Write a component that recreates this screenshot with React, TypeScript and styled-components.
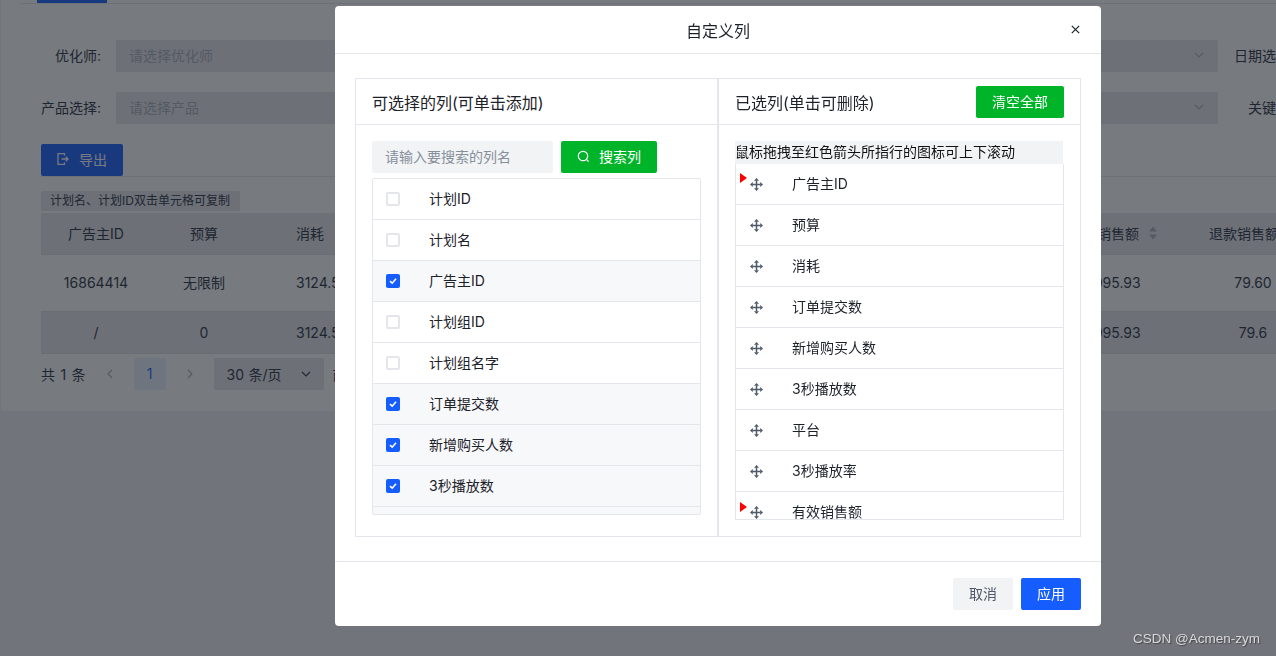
import React from 'react';
import styled, { createGlobalStyle } from 'styled-components';

const GlobalStyle = createGlobalStyle`
  html, body {
    margin: 0;
    padding: 0;
    height: 100%;
    overflow: hidden;
    background: #eff0f6;
    font-family: Inter, "Noto Sans CJK SC", sans-serif;
    font-size: 14px;
    color: #1d2129;
  }
  * {
    box-sizing: border-box;
  }
`;

const available = [
  { name: '计划ID', checked: false },
  { name: '计划名', checked: false },
  { name: '广告主ID', checked: true },
  { name: '计划组ID', checked: false },
  { name: '计划组名字', checked: false },
  { name: '订单提交数', checked: true },
  { name: '新增购买人数', checked: true },
  { name: '3秒播放数', checked: true },
];

const selected = ['广告主ID', '预算', '消耗', '订单提交数', '新增购买人数', '3秒播放数', '平台', '3秒播放率', '有效销售额'];

const ExportIcon = () => (
  <svg width="12" height="14" viewBox="0 0 12 14" fill="none" stroke="currentColor" strokeWidth="1.3">
    <path d="M7.5 3.5V1.7H1V12.3H7.5V10.5" />
    <path d="M4.5 7H11M8.8 4.8L11 7L8.8 9.2" />
  </svg>
);

const SearchIcon = () => (
  <svg width="13" height="13" viewBox="0 0 13 13" fill="none" stroke="currentColor" strokeWidth="1.2">
    <circle cx="6" cy="6" r="4.7" />
    <path d="M9.5 9.5L11.6 11.6" />
  </svg>
);

const DragIcon = () => (
  <svg width="13" height="13" viewBox="0 0 13 13">
    <path d="M6.5 0L9 2.8H4ZM6.5 13L4 10.2H9ZM0 6.5L2.8 4V9ZM13 6.5L10.2 9V4Z" fill="currentColor" />
    <path d="M6.5 2.5V10.5M2.5 6.5H10.5" fill="none" stroke="currentColor" strokeWidth="1.5" />
  </svg>
);

const CloseIcon = () => (
  <svg width="9" height="9" viewBox="0 0 9 9" fill="none" stroke="#1d2129" strokeWidth="1.2">
    <path d="M0.8 0.8L8.2 8.2M8.2 0.8L0.8 8.2" />
  </svg>
);

const SortIcon = () => (
  <SortGlyph width="8" height="14" viewBox="0 0 8 14">
    <path d="M4 0.5L8 5.5H0ZM4 13.5L0 8.5H8Z" fill="#a9aeb8" />
  </SortGlyph>
);

const Chevron = () => (
  <svg width="12" height="12" viewBox="0 0 12 12" fill="none" stroke="currentColor" strokeWidth="1.1">
    <path d="M2 4L6 8L10 4" />
  </svg>
);

const Left = () => (
  <svg width="12" height="12" viewBox="0 0 12 12" fill="none" stroke="currentColor" strokeWidth="1.1">
    <path d="M8 2L4 6L8 10" />
  </svg>
);

const Right = () => (
  <svg width="12" height="12" viewBox="0 0 12 12" fill="none" stroke="currentColor" strokeWidth="1.1">
    <path d="M4 2L8 6L4 10" />
  </svg>
);

function Background() {
  return (
    <Card>
      <Tabs>
        <ActiveTab />
      </Tabs>
      <FormArea>
        <FormRow>
          <FieldLabel>优化师:</FieldLabel>
          <SelectBox>
            请选择优化师
            <Chevron />
          </SelectBox>
          <TrailingLabel>日期选</TrailingLabel>
        </FormRow>
        <FormRow>
          <FieldLabel>产品选择:</FieldLabel>
          <SelectBox>
            请选择产品
            <Chevron />
          </SelectBox>
          <TrailingLabel $indent={30}>关键</TrailingLabel>
        </FormRow>
      </FormArea>
      <ActionBar>
        <ExportButton>
          <ExportIcon />
          导出
        </ExportButton>
      </ActionBar>
      <NoteTag>计划名、计划ID双击单元格可复制</NoteTag>
      <Table>
        <HeadRow>
          <Cell>广告主ID</Cell>
          <Cell>预算</Cell>
          <Cell $start>消耗</Cell>
          <Cell />
          <Cell>
            有效销售额
            <SortIcon />
          </Cell>
          <Cell>
            退款销售额
            <SortIcon />
          </Cell>
        </HeadRow>
        <BodyRow $height={57}>
          <Cell>16864414</Cell>
          <Cell>无限制</Cell>
          <Cell $start>3124.56</Cell>
          <Cell />
          <Cell>2995.93</Cell>
          <Cell>79.60</Cell>
        </BodyRow>
        <BodyRow $height={42} $total>
          <Cell>/</Cell>
          <Cell>0</Cell>
          <Cell $start>3124.56</Cell>
          <Cell />
          <Cell>2995.93</Cell>
          <Cell>79.6</Cell>
        </BodyRow>
      </Table>
      <Pagination>
        <span>共 1 条</span>
        <PageArrow>
          <Left />
        </PageArrow>
        <PageNumber>1</PageNumber>
        <PageArrow>
          <Right />
        </PageArrow>
        <PageSize>
          30 条/页
          <Chevron />
        </PageSize>
        <span>前往</span>
      </Pagination>
    </Card>
  );
}

function App() {
  return (
    <>
      <GlobalStyle />
      <Background />
      <Mask>
        <Dialog>
          <DialogHeader>
            自定义列
            <CloseButton>
              <CloseIcon />
            </CloseButton>
          </DialogHeader>
          <DialogBody>
            <Panels>
              <Panel>
                <PanelHead>可选择的列(可单击添加)</PanelHead>
                <PanelContent>
                  <SearchRow>
                    <SearchInput placeholder="请输入要搜索的列名" />
                    <SearchButton>
                      <SearchIcon />
                      搜索列
                    </SearchButton>
                  </SearchRow>
                  <ColumnList>
                    {available.map((item) => (
                      <ColumnRow key={item.name} $checked={item.checked}>
                        <Checkbox $checked={item.checked}>
                          {item.checked && (
                            <svg width="8" height="8" viewBox="0 0 8 8" fill="none" stroke="#fff" strokeWidth="1.6">
                              <path d="M1 4.2L3.2 6.2L7 1.8" />
                            </svg>
                          )}
                        </Checkbox>
                        <RowLabel>{item.name}</RowLabel>
                      </ColumnRow>
                    ))}
                  </ColumnList>
                </PanelContent>
              </Panel>
              <Panel>
                <PanelHead>
                  已选列(单击可删除)
                  <ClearButton>清空全部</ClearButton>
                </PanelHead>
                <PanelContent>
                  <Hint>鼠标拖拽至红色箭头所指行的图标可上下滚动</Hint>
                  <SelectedList>
                    {selected.map((name, i) => (
                      <SelectedRow key={name}>
                        {i === 0 && <RedArrow $top={9} />}
                        {i === 8 && <RedArrow $top={10} />}
                        <DragHandle>
                          <DragIcon />
                        </DragHandle>
                        <RowLabel>{name}</RowLabel>
                      </SelectedRow>
                    ))}
                  </SelectedList>
                </PanelContent>
              </Panel>
            </Panels>
          </DialogBody>
          <DialogFooter>
            <CancelButton>取消</CancelButton>
            <ApplyButton>应用</ApplyButton>
          </DialogFooter>
        </Dialog>
      </Mask>
      <Watermark>CSDN @Acmen-zym</Watermark>
    </>
  );
}

export default App;

const Card = styled.div`
  width: 1275px;
  height: 411px;
  margin-left: 1px;
  padding: 0 0 0 40px;
  background: #fff;
  border-radius: 0 0 4px 4px;
  overflow: hidden;
`;

const Tabs = styled.div`
  height: 4px;
  margin-left: -20px;
  padding-left: 16px;
  border-bottom: 1px solid #e5e6eb;
`;

const ActiveTab = styled.div`
  width: 70px;
  height: 3px;
  background: #165dff;
`;

const FormArea = styled.div`
  display: flex;
  flex-direction: column;
  gap: 20px;
  padding-top: 36px;
`;

const FormRow = styled.div`
  display: flex;
  align-items: center;
  height: 32px;
`;

const FieldLabel = styled.div`
  flex: none;
  width: 91px;
  margin: 0 0 2px -16px;
  padding-right: 15px;
  text-align: right;
  white-space: nowrap;
  color: #272e3b;
`;

const SelectBox = styled.div`
  flex: none;
  display: flex;
  align-items: center;
  justify-content: space-between;
  width: 1102px;
  height: 32px;
  padding: 0 13px 2px 13px;
  background: #e5e6eb;
  color: #a9aeb8;
  border-radius: 2px;
`;

const TrailingLabel = styled.div<{ $indent?: number }>`
  flex: none;
  margin-bottom: 2px;
  padding-left: ${(p) => p.$indent ?? 16}px;
  white-space: nowrap;
  color: #272e3b;
`;

const ActionBar = styled.div`
  height: 33px;
  margin-top: 20px;
  border-bottom: 1px solid #e5e6eb;
`;

const ExportButton = styled.div`
  display: flex;
  align-items: center;
  justify-content: center;
  gap: 10px;
  width: 82px;
  height: 32px;
  padding-bottom: 2px;
  background: #165dff;
  color: #fff;
  border-radius: 2px;
`;

const NoteTag = styled.div`
  width: 199px;
  height: 20px;
  margin-top: 14px;
  padding-left: 9px;
  background: #e5e6eb;
  border-radius: 2px;
  font-size: 12px;
  line-height: 20px;
  color: #272e3b;
`;

const Table = styled.div`
  margin-top: 2px;
`;

const rowColumns = '110px 106px 107px 679px 140px 140px';

const HeadRow = styled.div`
  display: grid;
  grid-template-columns: ${rowColumns};
  height: 42px;
  align-items: center;
  background: #e5e6eb;
  border-bottom: 1px solid #dcdee3;
  color: #272e3b;
`;

const BodyRow = styled.div<{ $height: number; $total?: boolean }>`
  display: grid;
  grid-template-columns: ${rowColumns};
  height: ${(p) => p.$height}px;
  padding-top: ${(p) => (p.$total ? '2px' : '0')};
  align-items: center;
  border-bottom: 1px solid #dcdee3;
  background: ${(p) => (p.$total ? '#e5e6eb' : '#fff')};
  color: #272e3b;
`;

const Cell = styled.div<{ $start?: boolean }>`
  display: flex;
  align-items: center;
  justify-content: ${(p) => (p.$start ? 'flex-start' : 'center')};
  padding: 0 0 2px ${(p) => (p.$start ? '39px' : '0')};
  white-space: nowrap;
`;

const SortGlyph = styled.svg`
  flex: none;
  margin-left: 10px;
`;

const Pagination = styled.div`
  display: flex;
  align-items: center;
  height: 32px;
  margin-top: 5px;
  padding-bottom: 2px;
  word-spacing: 1.5px;
  color: #272e3b;
`;

const PageArrow = styled.div`
  display: flex;
  align-items: center;
  justify-content: center;
  width: 32px;
  height: 32px;
  margin: 0 8px;
  color: #a9aeb8;
`;

const PageNumber = styled.div`
  width: 32px;
  height: 32px;
  line-height: 32px;
  text-align: center;
  background: #e8f3ff;
  color: #165dff;
  border-radius: 2px;
`;

const PageSize = styled.div`
  display: flex;
  align-items: center;
  justify-content: space-between;
  width: 110px;
  height: 32px;
  margin-right: 9px;
  padding: 0 12px 0 13px;
  word-spacing: 0.5px;
  background: #e5e6eb;
  border-radius: 2px;
`;

const Mask = styled.div`
  position: fixed;
  inset: 0;
  background: rgba(29, 33, 41, 0.6);
`;

const Dialog = styled.div`
  position: absolute;
  left: 335px;
  top: 6px;
  display: flex;
  flex-direction: column;
  width: 766px;
  height: 620px;
  background: #fff;
  border-radius: 4px;
`;

const DialogHeader = styled.div`
  position: relative;
  flex: none;
  display: flex;
  align-items: center;
  justify-content: center;
  height: 48px;
  border-bottom: 1px solid #e5e6eb;
  font-size: 16px;
  color: #1d2129;
`;

const CloseButton = styled.span`
  position: absolute;
  right: 21px;
  top: 19px;
  display: flex;
`;

const DialogBody = styled.div`
  flex: 1;
  padding: 24px 20px;
`;

const Panels = styled.div`
  display: grid;
  grid-template-columns: 1fr 1fr;
  height: 459px;
`;

const Panel = styled.div`
  display: flex;
  flex-direction: column;
  min-width: 0;
  height: 459px;
  border: 1px solid #e5e6eb;
`;

const PanelHead = styled.div`
  flex: none;
  display: flex;
  align-items: center;
  justify-content: space-between;
  height: 46px;
  padding: 0 16px;
  border-bottom: 1px solid #e5e6eb;
  font-size: 16px;
  color: #1d2129;
`;

const PanelContent = styled.div`
  flex: 1;
  min-height: 0;
  padding: 16px;
`;

const SearchRow = styled.div`
  display: flex;
  gap: 8px;
  margin-bottom: 5px;
`;

const SearchInput = styled.input`
  width: 181px;
  height: 32px;
  padding: 0 13px 2px;
  border: 0;
  outline: 0;
  border-radius: 2px;
  background: #f2f3f5;
  font: inherit;

  &::placeholder {
    color: #86909c;
  }
`;

const SearchButton = styled.div`
  display: flex;
  align-items: center;
  justify-content: center;
  gap: 9px;
  width: 96px;
  height: 32px;
  padding-bottom: 2px;
  background: #00b42a;
  color: #fff;
  border-radius: 2px;
`;

const ColumnList = styled.div`
  height: 337px;
  overflow: hidden;
  background: #f7f8fa;
  border: 1px solid #e5e6eb;
  border-radius: 2px;
`;

const ColumnRow = styled.div<{ $checked: boolean }>`
  display: flex;
  align-items: center;
  height: 41px;
  padding-left: 13px;
  border-bottom: 1px solid #e5e6eb;
  background: ${(p) => (p.$checked ? '#f7f8fa' : '#fff')};
  color: #1d2129;
`;

const RowLabel = styled.span`
  margin-bottom: 2px;
`;

const Checkbox = styled.span<{ $checked: boolean }>`
  display: flex;
  align-items: center;
  justify-content: center;
  width: 14px;
  height: 14px;
  margin-right: 29px;
  border-radius: 2px;
  border: ${(p) => (p.$checked ? '0' : '2px solid #e5e6eb')};
  background: ${(p) => (p.$checked ? '#165dff' : '#fff')};
`;

const ClearButton = styled.div`
  display: flex;
  align-items: center;
  justify-content: center;
  width: 88px;
  height: 32px;
  padding-bottom: 2px;
  background: #00b42a;
  color: #fff;
  border-radius: 2px;
  font-size: 14px;
`;

const Hint = styled.div`
  width: 328px;
  height: 23px;
  background: #f2f3f5;
  color: #111;
  line-height: 22px;
  white-space: nowrap;
`;

const SelectedList = styled.div`
  width: 329px;
  height: 356px;
  overflow: hidden;
  border: 1px solid #e5e6eb;
  border-top: 0;
`;

const SelectedRow = styled.div`
  position: relative;
  display: flex;
  align-items: center;
  height: 41px;
  padding-left: 14px;
  border-bottom: 1px solid #e5e6eb;
  color: #1d2129;
`;

const RedArrow = styled.span<{ $top: number }>`
  position: absolute;
  left: 4px;
  top: ${(p) => p.$top}px;
  width: 0;
  height: 0;
  border-left: 7px solid #ff0000;
  border-top: 5.5px solid transparent;
  border-bottom: 5.5px solid transparent;
`;

const DragHandle = styled.span`
  display: flex;
  margin-right: 29px;
  color: #4e5969;
`;

const DialogFooter = styled.div`
  flex: none;
  display: flex;
  justify-content: flex-end;
  gap: 8px;
  height: 65px;
  padding: 16px 20px;
  border-top: 1px solid #e5e6eb;
`;

const CancelButton = styled.div`
  display: flex;
  align-items: center;
  justify-content: center;
  width: 60px;
  height: 32px;
  padding-bottom: 2px;
  background: #f2f3f5;
  color: #4e5969;
  border-radius: 2px;
`;

const ApplyButton = styled(CancelButton)`
  background: #165dff;
  color: #fff;
`;

const Watermark = styled.div`
  position: fixed;
  right: 16px;
  top: 630px;
  color: #d8d8d8;
  font-family: "Liberation Sans", sans-serif;
  font-size: 13.5px;
  line-height: 17px;
  text-shadow: 1px 1px 1px rgba(0, 0, 0, 0.4);
`;
